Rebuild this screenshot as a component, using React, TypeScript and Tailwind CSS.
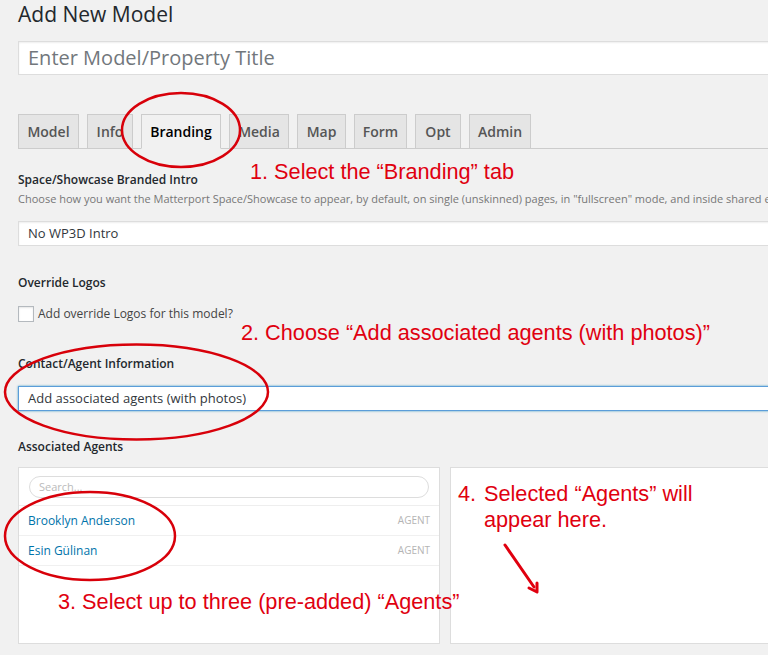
import React from 'react';

const tabs = [
  { name: 'Model', w: 'w-[61px]' },
  { name: 'Info', w: 'w-[46px]' },
  { name: 'Branding', w: 'w-[80px]', active: true },
  { name: 'Media', w: 'w-[60px]' },
  { name: 'Map', w: 'w-[49px]' },
  { name: 'Form', w: 'w-[53px]' },
  { name: 'Opt', w: 'w-[46px]' },
  { name: 'Admin', w: 'w-[62px]' },
];

const agents = ['Brooklyn Anderson', 'Esin Gülinan'];

function Label({ children, className = '' }: { children: React.ReactNode; className?: string }) {
  return <div className={`text-[12px] leading-[18px] font-semibold text-[#23282d] ${className}`}>{children}</div>;
}

export default function App() {
  return (
    <div className="relative w-[768px] h-[655px] overflow-hidden bg-[#f1f1f1] font-['Open_Sans',sans-serif]">
      <div className="w-[1000px] pl-[18px]">
        <h1 className="text-[21px] leading-[29px] font-normal text-[#23282d]">Add New Model</h1>

        {/* title */}
        <div className="mt-[12px] h-[34px] bg-white border border-[#ddd] shadow-[inset_0_1px_2px_rgba(0,0,0,0.07)] flex items-center pl-[9px]">
          <span className="text-[20px] text-[#72777c]">Enter Model/Property Title</span>
        </div>

        {/* tabs */}
        <div className="mt-[39px] flex gap-[8px] border-b border-[#ccc]">
          {tabs.map(t => (
            <div
              key={t.name}
              className={`${t.w} h-[35px] -mb-px flex items-center justify-center border border-[#ccc] text-[14px] font-semibold ${
                t.active ? 'bg-[#f1f1f1] border-b-[#f1f1f1] text-[#000]' : 'bg-[#e5e5e5] text-[#555]'
              }`}
            >
              {t.name}
            </div>
          ))}
        </div>

        <Label className="mt-[22px]">Space/Showcase Branded Intro</Label>
        <div className="mt-[1px] w-[750px] overflow-hidden text-[11px] leading-[18px] text-[#777] whitespace-nowrap">
          Choose how you want the Matterport Space/Showcase to appear, by default, on single (unskinned) pages, in "fullscreen" mode, and inside shared embeds.
        </div>
        <div className="mt-[13px] h-[25px] bg-white border border-[#ddd] shadow-[inset_0_1px_2px_rgba(0,0,0,0.07)] flex items-center pl-[9px] text-[13px] text-[#32373c]">
          No WP3D Intro
        </div>

        <Label className="mt-[28px]">Override Logos</Label>
        <div className="mt-[13px] flex items-center gap-[4px] h-[18px]">
          <span className="w-[16px] h-[16px] bg-white border border-[#b4b9be] shadow-[inset_0_1px_2px_rgba(0,0,0,0.1)]" />
          <span className="text-[12px] text-[#444]">Add override Logos for this model?</span>
        </div>

        <Label className="mt-[32px]">Contact/Agent Information</Label>
        <div className="mt-[13px] h-[25px] bg-white border border-[#5b9dd9] shadow-[0_0_2px_rgba(30,140,190,0.8)] flex items-center pl-[9px] text-[13px] text-[#32373c]">
          Add associated agents (with photos)
        </div>

        <Label className="mt-[27px]">Associated Agents</Label>
        <div className="mt-[11px] flex gap-[10px]">
          <div className="w-[422px] h-[177px] bg-white border border-[#ddd]">
            <div className="px-[10px] pt-[8px] pb-[7px] border-b border-[#eee]">
              <div className="h-[22px] rounded-full border border-[#ddd] flex items-center pl-[9px] text-[11px] text-[#bbb]">Search...</div>
            </div>
            {agents.map(a => (
              <div key={a} className="h-[30px] flex items-center justify-between pl-[9px] pr-[9px] border-b border-[#f0f0f0]">
                <span className="text-[12px] text-[#0073aa]">{a}</span>
                <span className="text-[10px] text-[#b4b4b4] uppercase">Agent</span>
              </div>
            ))}
          </div>
          <div className="flex-1 h-[177px] bg-white border border-[#ddd]" />
        </div>
      </div>

      {/* annotations */}
      <svg className="absolute inset-0 pointer-events-none" width="768" height="655" viewBox="0 0 768 655" fill="none">
        <ellipse cx="181" cy="130" rx="59" ry="37" stroke="#d8000a" strokeWidth="2.5" />
        <ellipse cx="136.5" cy="392" rx="131.5" ry="47.5" stroke="#d8000a" strokeWidth="2.5" />
        <ellipse cx="90" cy="536" rx="85" ry="44" stroke="#d8000a" strokeWidth="2.5" />
        <path d="M505 545 L534 587" stroke="#e0000f" strokeWidth="3" strokeLinecap="round" />
        <path d="M529 588 L537 592 L537 583" stroke="#e0000f" strokeWidth="3" strokeLinecap="round" strokeLinejoin="round" />
      </svg>
      <div className="absolute inset-0 pointer-events-none font-['Liberation_Sans',Arial,sans-serif] text-[21.7px] leading-[22px] text-[#e0000f]">
        <div className="absolute left-[250px] top-[161px] whitespace-nowrap">1. Select the “Branding” tab</div>
        <div className="absolute left-[241px] top-[322px] whitespace-nowrap">2. Choose “Add associated agents (with photos)”</div>
        <div className="absolute left-[458px] top-[481px] flex leading-[26px]">
          <span className="w-[26px]">4.</span>
          <div className="whitespace-nowrap">
            <div>Selected “Agents” will</div>
            <div>appear here.</div>
          </div>
        </div>
        <div className="absolute left-[58px] top-[591px] whitespace-nowrap">3. Select up to three (pre-added) “Agents”</div>
      </div>
    </div>
  );
}
